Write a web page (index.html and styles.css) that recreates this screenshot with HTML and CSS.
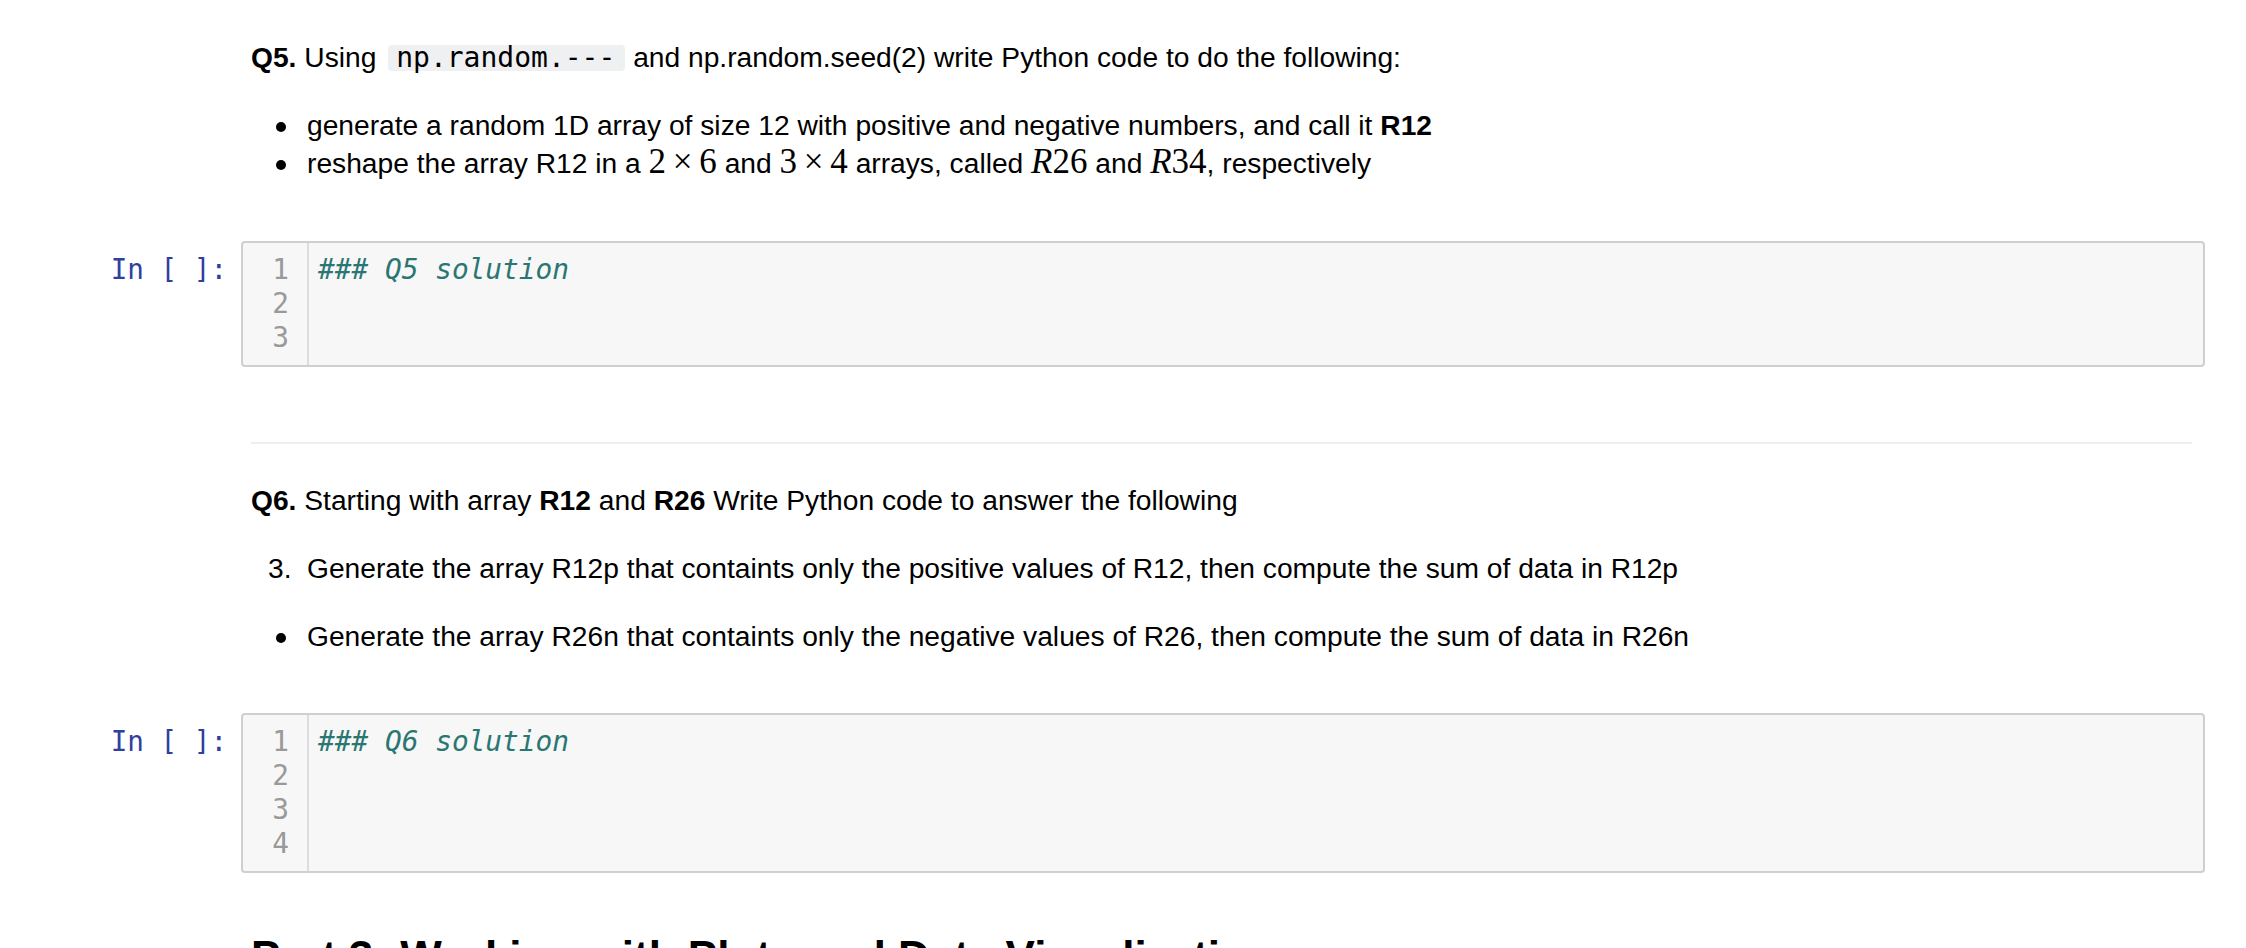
FILE: index.html
```html
<!DOCTYPE html>
<html lang="en">
<head>
<meta charset="utf-8">
<title>Notebook</title>
<link rel="stylesheet" href="styles.css">
</head>
<body>
<div class="nb">
  <div class="cell md md-q5">
    <div class="prompt"></div>
    <div class="md-body">
      <p class="para"><b>Q5.</b> Using <code class="ic">np.random.---</code> and np.random.seed(2) write Python code to do the following:</p>
      <ul class="list list-first">
        <li class="item"><span class="mk"><span class="dot"></span></span><span class="txt">generate a random 1D array of size 12 with positive and negative numbers, and call it <b>R12</b></span></li>
        <li class="item"><span class="mk"><span class="dot"></span></span><span class="txt">reshape the array R12 in a <span class="m">2 × 6</span> and <span class="m">3 × 4</span> arrays, called <span class="m"><i>R</i>26</span> and <span class="m"><i>R</i>34</span>, respectively</span></li>
      </ul>
    </div>
  </div>

  <div class="cell code code-q5">
    <div class="prompt">In [ ]:</div>
    <div class="input">
      <div class="gutter"><div>1</div><div>2</div><div>3</div></div>
      <div class="lines"><div class="cmt">### Q5 solution</div><div>&nbsp;</div><div>&nbsp;</div></div>
    </div>
  </div>

  <div class="cell md md-q6">
    <div class="prompt"></div>
    <div class="md-body">
      <hr class="rule">
      <p class="para para-q6"><b>Q6.</b> Starting with array <b>R12</b> and <b>R26</b> Write Python code to answer the following</p>
      <ol class="list list-sep">
        <li class="item"><span class="mk"><span class="num">3.</span></span><span class="txt">Generate the array R12p that containts only the positive values of R12, then compute the sum of data in R12p</span></li>
      </ol>
      <ul class="list list-sep">
        <li class="item"><span class="mk"><span class="dot"></span></span><span class="txt">Generate the array R26n that containts only the negative values of R26, then compute the sum of data in R26n</span></li>
      </ul>
    </div>
  </div>

  <div class="cell code code-q6">
    <div class="prompt">In [ ]:</div>
    <div class="input">
      <div class="gutter"><div>1</div><div>2</div><div>3</div><div>4</div></div>
      <div class="lines"><div class="cmt">### Q6 solution</div><div>&nbsp;</div><div>&nbsp;</div><div>&nbsp;</div></div>
    </div>
  </div>

  <div class="cell md md-part">
    <div class="prompt"></div>
    <div class="md-body">
      <h2 class="h2">Part 3: Working with Plots and Data Visualization</h2>
    </div>
  </div>
</div>
</body>
</html>
```
FILE: styles.css
```css
html, body {
  margin: 0;
  padding: 0;
  overflow: hidden;
  background: #ffffff;
}

body {
  font-family: "Liberation Sans", Arial, sans-serif;
  font-size: 28.2px;
  line-height: 38px;
  color: #000000;
}

.nb {
  padding: 38px 41px 0 0;
}

.cell {
  display: flex;
}

.prompt {
  flex: none;
  width: 227px;
  padding: 12px 14px 0 0;
  text-align: right;
  font-family: "DejaVu Sans Mono", monospace;
  font-size: 27.6px;
  line-height: 34px;
  color: #303f9f;
  white-space: pre;
}

.md-body {
  flex: 1;
  min-width: 0;
  padding: 0 13px 0 10px;
}

.para {
  margin: 0;
}

.para b, .txt b {
  font-weight: 700;
}

.ic {
  display: inline-block;
  margin-left: 4px;
  font-family: "DejaVu Sans Mono", monospace;
  font-size: 28px;
  line-height: 26px;
  padding: 0 10px 0 8px;
  background: #eff0f1;
  border-radius: 4px;
}

.list {
  list-style: none;
  margin: 30px 0 0 0;
  padding: 0;
}

.item {
  display: flex;
}

.mk {
  flex: none;
  width: 56px;
  display: flex;
  align-items: flex-start;
}

.dot {
  width: 10px;
  height: 10px;
  border-radius: 50%;
  background: #000000;
  margin: 16px 0 0 25px;
}

.num {
  padding-left: 17px;
}

.m {
  font-family: "Liberation Serif", "DejaVu Serif", serif;
  font-size: 35px;
  line-height: 30px;
  word-spacing: -2px;
}

.code-q5 {
  margin-top: 59px;
}

.code-q6 {
  margin-top: 58px;
}

.input {
  flex: 1;
  min-width: 0;
  display: flex;
  border: 2px solid #cfcfcf;
  border-radius: 4px;
  background: #f7f7f7;
  font-family: "DejaVu Sans Mono", monospace;
  font-size: 27.8px;
  line-height: 34px;
}

.gutter {
  flex: none;
  box-sizing: border-box;
  width: 66px;
  padding: 10px 18px 10px 0;
  border-right: 2px solid #dddddd;
  text-align: right;
  color: #999999;
}

.lines {
  flex: 1;
  padding: 10px 0 10px 9px;
}

.cmt {
  font-style: italic;
  color: #2a7672;
}

.rule {
  margin: 75px 0 0 0;
  border: none;
  height: 2px;
  background: #eeeeee;
}

.para-q6 {
  margin-top: 37px;
}

.md-part {
  margin-top: 61px;
}

.h2 {
  margin: 0;
  font-size: 44px;
  line-height: 46px;
  font-weight: 700;
}
```
